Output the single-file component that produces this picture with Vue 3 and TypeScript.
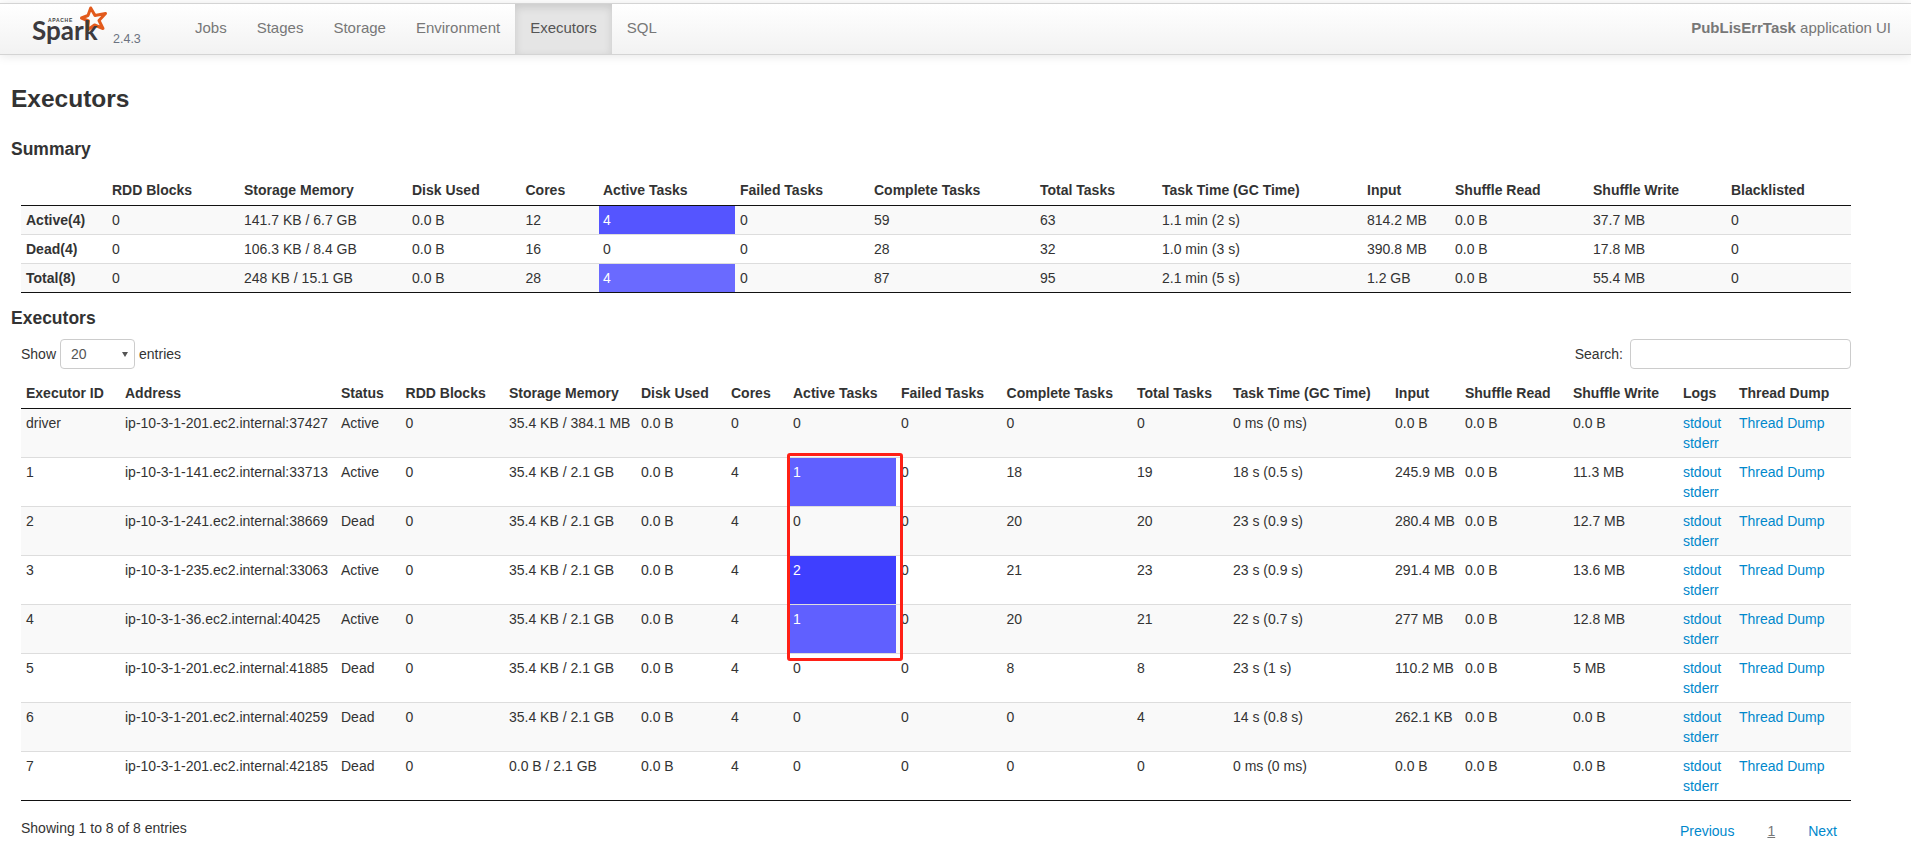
<script setup lang="ts">
const navItems = ['Jobs', 'Stages', 'Storage', 'Environment', 'Executors', 'SQL']

const summaryCols = [86, 132, 168, 113.5, 78.5, 136, 134, 166, 122, 205, 88, 138, 138, 125]
const summaryHead = ['', 'RDD Blocks', 'Storage Memory', 'Disk Used', 'Cores', 'Active Tasks', 'Failed Tasks', 'Complete Tasks', 'Total Tasks', 'Task Time (GC Time)', 'Input', 'Shuffle Read', 'Shuffle Write', 'Blacklisted']
const summaryRows = [
  { label: 'Active(4)', a: ['0', '141.7 KB / 6.7 GB', '0.0 B', '12'], active: '4', fill: 'rgb(85,85,255)', b: ['0', '59', '63', '1.1 min (2 s)', '814.2 MB', '0.0 B', '37.7 MB', '0'] },
  { label: 'Dead(4)', a: ['0', '106.3 KB / 8.4 GB', '0.0 B', '16'], active: '0', fill: '', b: ['0', '28', '32', '1.0 min (3 s)', '390.8 MB', '0.0 B', '17.8 MB', '0'] },
  { label: 'Total(8)', a: ['0', '248 KB / 15.1 GB', '0.0 B', '28'], active: '4', fill: 'rgb(106,106,255)', b: ['0', '87', '95', '2.1 min (5 s)', '1.2 GB', '0.0 B', '55.4 MB', '0'] }
]

const execCols = [99, 216, 64.6, 103.4, 132, 90, 62, 108, 105.6, 130.4, 96, 162, 70, 108, 110, 56, 117]
const execHead = ['Executor ID', 'Address', 'Status', 'RDD Blocks', 'Storage Memory', 'Disk Used', 'Cores', 'Active Tasks', 'Failed Tasks', 'Complete Tasks', 'Total Tasks', 'Task Time (GC Time)', 'Input', 'Shuffle Read', 'Shuffle Write', 'Logs', 'Thread Dump']
const blue1 = 'rgb(96,96,255)'
const blue2 = 'rgb(63,63,255)'
const execRows = [
  { a: ['driver', 'ip-10-3-1-201.ec2.internal:37427', 'Active', '0', '35.4 KB / 384.1 MB', '0.0 B', '0'], active: '0', fill: '', b: ['0', '0', '0', '0 ms (0 ms)', '0.0 B', '0.0 B', '0.0 B'] },
  { a: ['1', 'ip-10-3-1-141.ec2.internal:33713', 'Active', '0', '35.4 KB / 2.1 GB', '0.0 B', '4'], active: '1', fill: blue1, b: ['0', '18', '19', '18 s (0.5 s)', '245.9 MB', '0.0 B', '11.3 MB'] },
  { a: ['2', 'ip-10-3-1-241.ec2.internal:38669', 'Dead', '0', '35.4 KB / 2.1 GB', '0.0 B', '4'], active: '0', fill: '', b: ['0', '20', '20', '23 s (0.9 s)', '280.4 MB', '0.0 B', '12.7 MB'] },
  { a: ['3', 'ip-10-3-1-235.ec2.internal:33063', 'Active', '0', '35.4 KB / 2.1 GB', '0.0 B', '4'], active: '2', fill: blue2, b: ['0', '21', '23', '23 s (0.9 s)', '291.4 MB', '0.0 B', '13.6 MB'] },
  { a: ['4', 'ip-10-3-1-36.ec2.internal:40425', 'Active', '0', '35.4 KB / 2.1 GB', '0.0 B', '4'], active: '1', fill: blue1, b: ['0', '20', '21', '22 s (0.7 s)', '277 MB', '0.0 B', '12.8 MB'] },
  { a: ['5', 'ip-10-3-1-201.ec2.internal:41885', 'Dead', '0', '35.4 KB / 2.1 GB', '0.0 B', '4'], active: '0', fill: '', b: ['0', '8', '8', '23 s (1 s)', '110.2 MB', '0.0 B', '5 MB'] },
  { a: ['6', 'ip-10-3-1-201.ec2.internal:40259', 'Dead', '0', '35.4 KB / 2.1 GB', '0.0 B', '4'], active: '0', fill: '', b: ['0', '0', '4', '14 s (0.8 s)', '262.1 KB', '0.0 B', '0.0 B'] },
  { a: ['7', 'ip-10-3-1-201.ec2.internal:42185', 'Dead', '0', '0.0 B / 2.1 GB', '0.0 B', '4'], active: '0', fill: '', b: ['0', '0', '0', '0 ms (0 ms)', '0.0 B', '0.0 B', '0.0 B'] }
]
</script>

<template>
  <div class="page">
    <header class="navbar">
      <div class="brand">
        <div class="logo">
          <svg class="star" viewBox="0 0 32 30" width="32" height="30" aria-hidden="true">
            <path d="M12.7 4 L17 11.5 L27.5 9.5 L21 16.5 L25 24.5 L16.5 21 L9.5 26 L10.5 17 L3.5 14 L10 11.5 Z" fill="none" stroke="#e25a1c" stroke-width="3" stroke-linejoin="round" />
          </svg>
          <span class="apache">APACHE</span>
          <span class="wordmark">Spark</span>
        </div>
        <span class="version">2.4.3</span>
      </div>
      <nav class="nav">
        <a v-for="n in navItems" :key="n" class="nav-link" :class="{ active: n === 'Executors' }">{{ n }}</a>
      </nav>
      <div class="app-title"><strong>PubLisErrTask</strong> application UI</div>
    </header>

    <main class="content">
      <h3 class="title">Executors</h3>
      <h4 class="summary-h">Summary</h4>

      <table class="tbl summary">
        <colgroup><col v-for="(w, i) in summaryCols" :key="i" :style="{ width: w + 'px' }" /></colgroup>
        <thead><tr><th v-for="(h, i) in summaryHead" :key="i">{{ h }}</th></tr></thead>
        <tbody>
          <tr v-for="r in summaryRows" :key="r.label">
            <td class="label">{{ r.label }}</td>
            <td v-for="(c, i) in r.a" :key="i">{{ c }}</td>
            <td :class="{ bar: r.fill }" :style="{ background: r.fill || undefined }">{{ r.active }}</td>
            <td v-for="(c, i) in r.b" :key="'b' + i">{{ c }}</td>
          </tr>
        </tbody>
      </table>

      <h4 class="exec-h">Executors</h4>

      <div class="controls">
        <div class="show">
          <span>Show</span>
          <span class="select-wrap">
            <select class="select"><option>20</option></select>
          </span>
          <span>entries</span>
        </div>
        <label class="search">
          <span>Search:</span>
          <input class="search-input" type="text" />
        </label>
      </div>

      <div class="exec-wrap">
        <table class="tbl execs">
          <colgroup><col v-for="(w, i) in execCols" :key="i" :style="{ width: w + 'px' }" /></colgroup>
          <thead><tr><th v-for="h in execHead" :key="h">{{ h }}</th></tr></thead>
          <tbody>
            <tr v-for="r in execRows" :key="r.a[0]">
              <td v-for="(c, i) in r.a" :key="i">{{ c }}</td>
              <td :class="{ bar: r.fill }" :style="{ background: r.fill || undefined }">{{ r.active }}</td>
              <td v-for="(c, i) in r.b" :key="'b' + i">{{ c }}</td>
              <td><a class="link">stdout</a><br /><a class="link">stderr</a></td>
              <td><a class="link">Thread Dump</a></td>
            </tr>
          </tbody>
        </table>
        <div class="annotation"></div>
      </div>

      <div class="footer-row">
        <div class="info">Showing 1 to 8 of 8 entries</div>
        <div class="pager">
          <a class="link">Previous</a>
          <a class="page-num">1</a>
          <a class="link">Next</a>
        </div>
      </div>
    </main>
  </div>
</template>

<style>
html, body { margin: 0; background: #fff; }
</style>

<style scoped>
.page {
  width: 1911px;
  height: 861px;
  overflow: hidden;
  padding-top: 3px;
  box-sizing: border-box;
  font-family: "Liberation Sans", Arial, sans-serif;
  font-size: 14px;
  line-height: 20px;
  color: #333;
}
.navbar {
  display: flex;
  align-items: stretch;
  height: 52px;
  box-sizing: border-box;
  border-top: 1px solid #d4d4d4;
  border-bottom: 1px solid #d4d4d4;
  background: linear-gradient(to bottom, #fff, #f2f2f2);
  box-shadow: 0 1px 10px rgba(0, 0, 0, 0.1);
}
.brand {
  width: 180px;
  padding-left: 33px;
  box-sizing: border-box;
  display: flex;
  flex-shrink: 0;
}
.logo {
  position: relative;
  width: 66px;
  height: 50px;
}
.star { position: absolute; left: 45px; top: 0; }
.apache {
  position: absolute;
  left: 15px;
  top: 13px;
  font-size: 5px;
  line-height: 6px;
  font-weight: 700;
  letter-spacing: 0.7px;
  color: #444;
}
.wordmark {
  position: absolute;
  left: -1px;
  top: 13px;
  font-family: "Lato", sans-serif;
  font-size: 26px;
  line-height: 26px;
  font-weight: 700;
  letter-spacing: 0;
  color: #3c3a3e;
}
.version {
  margin: 28px 0 0 14px;
  font-size: 12.5px;
  line-height: 14px;
  color: #6b7280;
}
.nav { display: flex; flex: 1; }
.nav-link {
  padding: 14px 15px;
  font-size: 15px;
  color: #777;
  height: 50px;
  box-sizing: border-box;
}
.nav-link.active {
  color: #555;
  background: #e5e5e5;
  box-shadow: inset 0 3px 8px rgba(0, 0, 0, 0.125);
}
.app-title {
  padding: 14px 20px 0 0;
  font-size: 15px;
  color: #777;
}
.content { padding: 0 60px 0 11px; }
.title {
  margin: 29px 0 0;
  font-size: 24.5px;
  line-height: 30px;
  font-weight: 700;
}
.summary-h, .exec-h {
  margin: 0;
  font-size: 17.5px;
  line-height: 20px;
  font-weight: 700;
}
.summary-h { margin-top: 25px; }
.exec-h { margin-top: 15px; }
.tbl {
  margin-left: 10px;
  width: 1830px;
  table-layout: fixed;
  border-collapse: collapse;
  border-bottom: 1px solid #111;
}
.tbl th {
  padding: 4px 5px 5px;
  text-align: left;
  font-weight: 700;
  white-space: nowrap;
  border-bottom: 1px solid #111;
}
.tbl td {
  padding: 4px 5px;
  vertical-align: top;
  white-space: nowrap;
  border-top: 1px solid #ddd;
}
.tbl tbody tr:first-child td { border-top: 0; }
.tbl tbody tr:nth-child(odd) td { background-color: #f9f9f9; }
.tbl tbody td.bar { color: #fff; }
.summary { margin-top: 17px; }
.summary th:nth-child(6), .summary td:nth-child(6) { padding-left: 4px; }
.label { font-weight: 700; }
.controls {
  display: flex;
  justify-content: space-between;
  align-items: center;
  height: 30px;
  margin: 11px 0 0 10px;
}
.show { display: flex; align-items: center; color: #333; }
.select-wrap {
  position: relative;
  display: block;
  width: 75px;
  height: 30px;
  margin: 0 4px 0 4px;
}
.select-wrap::after {
  content: "";
  position: absolute;
  right: 7px;
  top: 13px;
  border-left: 3px solid transparent;
  border-right: 3px solid transparent;
  border-top: 5px solid #555;
}
.select {
  appearance: none;
  width: 100%;
  height: 100%;
  box-sizing: border-box;
  padding: 0 0 0 10px;
  background: #fff;
  border: 1px solid #ccc;
  border-radius: 4px;
  font: inherit;
  color: #555;
}
.search { display: flex; align-items: center; }
.search-input {
  width: 221px;
  height: 30px;
  box-sizing: border-box;
  margin-left: 7px;
  border: 1px solid #ccc;
  border-radius: 4px;
  background: #fff;
}
.exec-wrap { position: relative; margin-top: 10px; }
.execs th { height: 20px; }
.annotation {
  position: absolute;
  left: 776px;
  top: 74px;
  width: 116px;
  height: 208px;
  box-sizing: border-box;
  border: 3px solid #ff2016;
  border-radius: 3px;
  pointer-events: none;
}
.link { color: #0088cc; }
.footer-row {
  display: flex;
  justify-content: space-between;
  margin-left: 10px;
  margin-top: 17px;
}
.pager {
  display: flex;
  padding: 3px 14px 0 0;
}
.page-num {
  margin: 0 33px 0 33px;
  color: #777;
  text-decoration: underline;
}
</style>
